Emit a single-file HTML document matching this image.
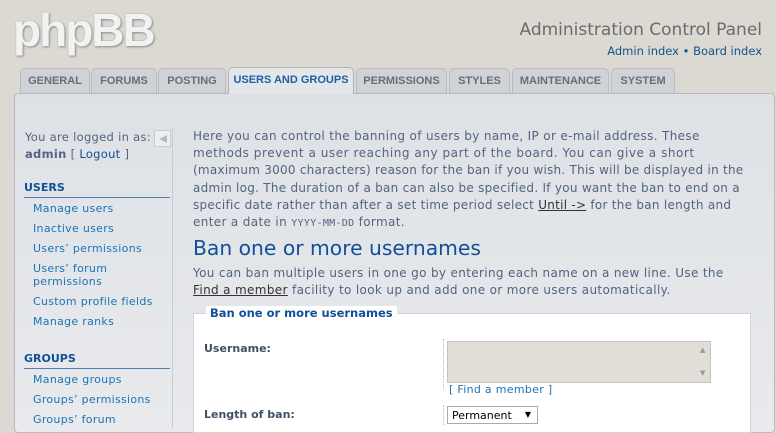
<!DOCTYPE html>
<html><head><meta charset="utf-8"><style>
*{margin:0;padding:0;box-sizing:border-box}
body{width:776px;height:422px;overflow:hidden;background:#dcd9d3;font-family:"DejaVu Sans",sans-serif;font-size:12px;color:#536482;position:relative}
.abs{position:absolute}
.logo{left:13px;top:3px;font-family:"Liberation Sans",sans-serif;font-size:46px;font-weight:bold;color:#f2f2f2;letter-spacing:-2px;text-shadow:0 0 1px #999,1px 1px 2px #888;}
.acp{right:14px;top:20px;font-size:17px;color:#6b6b6b}
.links{right:14px;top:44px;font-size:11.5px;color:#105289}
.tab{position:absolute;top:68px;height:25px;background:#cfd3d8;border:1px solid #b8bcc2;border-bottom:none;border-radius:5px 5px 0 0;font-family:"Liberation Sans",sans-serif;font-size:11px;font-weight:bold;color:#6a6e74;text-align:center;line-height:24px}
.tab.on{background:#e4e7ea;color:#2060a0;height:27px;top:67px;border-color:#aeb3b9}
.panel{left:14px;top:93px;width:761px;height:340px;background:linear-gradient(#dde1e5,#e9eaed);border:1px solid #b5b9bf;border-radius:4px}
.side a,.side div{position:absolute;left:33px;color:#1b74b8;font-size:11px;line-height:13px;letter-spacing:0.3px}
.hd{position:absolute;left:24px;width:146px;font-weight:bold;font-size:10.5px;color:#115098;border-bottom:1px solid #4f7eaa;padding-bottom:3px;letter-spacing:0 !important}
.main{left:193px;top:128px;line-height:17.2px;color:#536482;font-size:12px;letter-spacing:0.35px;white-space:nowrap}
u{color:#333}
</style></head><body>
<div class="abs logo">phpBB</div>
<div class="abs acp">Administration Control Panel</div>
<div class="abs links">Admin index • Board index</div>
<div class="abs panel"></div>
<div class="tab" style="left:20px;width:70px">GENERAL</div>
<div class="tab" style="left:91px;width:66px">FORUMS</div>
<div class="tab" style="left:158px;width:68px">POSTING</div>
<div class="tab on" style="left:228px;width:126px">USERS AND GROUPS</div>
<div class="tab" style="left:356px;width:91px">PERMISSIONS</div>
<div class="tab" style="left:449px;width:61px">STYLES</div>
<div class="tab" style="left:512px;width:97px">MAINTENANCE</div>
<div class="tab" style="left:611px;width:64px">SYSTEM</div>

<div class="abs" style="left:25px;top:129px;font-size:11.5px;color:#536482;line-height:17px;letter-spacing:0.3px">You are logged in as:<br><b style="color:#536482">admin</b> [ <span style="color:#105289">Logout</span> ]</div>
<div class="abs" style="left:154px;top:130px;width:17px;height:17px;background:#eceef0;border:1px solid #c8ccd0"><div style="position:absolute;left:4px;top:4px;border-right:8px solid #b8bcc2;border-top:4px solid transparent;border-bottom:4px solid transparent"></div></div>
<div class="abs" style="left:172px;top:128px;width:1px;height:300px;background:#c8ccd2"></div>
<div class="side">
<div class="hd" style="top:181px;left:24px;color:#115098">USERS</div>
<a style="top:202px">Manage users</a>
<a style="top:222px">Inactive users</a>
<a style="top:242px">Users’ permissions</a>
<a style="top:262px">Users’ forum<br>permissions</a>
<a style="top:295px">Custom profile fields</a>
<a style="top:315px">Manage ranks</a>
<div class="hd" style="top:352px;left:24px;color:#115098">GROUPS</div>
<a style="top:373px">Manage groups</a>
<a style="top:393px">Groups’ permissions</a>
<a style="top:413px">Groups’ forum</a>
</div>

<div class="abs main">Here you can control the banning of users by name, IP or e-mail address. These<br><span style="letter-spacing:0.55px">methods prevent a user reaching any part of the board. You can give a short</span><br><span style="letter-spacing:0.25px">(maximum 3000 characters) reason for the ban if you wish. This will be displayed in the</span><br><span style="letter-spacing:0.27px">admin log. The duration of a ban can also be specified. If you want the ban to end on a</span><br><span style="letter-spacing:0.27px">specific date rather than after a set time period select <u>Until -&gt;</u> for the ban length and</span><br>enter a date in <span style="font-family:'DejaVu Sans Mono',monospace;font-size:10px;letter-spacing:0.3px">YYYY-MM-DD</span> format.</div>
<div class="abs" style="left:193px;top:236px;font-size:20.3px;color:#115098">Ban one or more usernames</div>
<div class="abs main" style="top:265px">You can ban multiple users in one go by entering each name on a new line. Use the<br><u>Find a member</u> facility to look up and add one or more users automatically.</div>
<div class="abs" style="left:193px;top:313px;width:558px;height:120px;background:#fff;border:1px solid #d0d3d8"></div>
<div class="abs" style="left:206px;top:306px;background:#fff;padding:0 4px;font-weight:bold;font-size:11.5px;color:#115098">Ban one or more usernames</div>
<div class="abs" style="left:204px;top:342px;font-weight:bold;font-size:11px;color:#425067">Username:</div>
<div class="abs" style="left:204px;top:408px;font-weight:bold;font-size:11px;color:#425067">Length of ban:</div>
<div class="abs" style="left:443px;top:339px;height:50px;border-left:1px dotted #bbb"></div>
<div class="abs" style="left:443px;top:405px;height:20px;border-left:1px dotted #bbb"></div>
<div class="abs" style="left:447px;top:341px;width:264px;height:42px;background:#e1ddd7;border:1px solid #c5c5c5"></div>
<div class="abs" style="left:700px;top:346px;font-size:7px;color:#999">▲</div>
<div class="abs" style="left:700px;top:369px;font-size:7px;color:#999">▼</div>
<div class="abs" style="left:449px;top:383px;color:#1b74b8;font-size:11px;letter-spacing:0.3px">[ Find a member ]</div>
<div class="abs" style="left:447px;top:406px;width:91px;height:18px;border:1px solid #aaa;background:#fff;font-size:11px;color:#000;padding:2px 4px">Permanent <span style="position:absolute;right:6px;top:3px;font-size:8px">▼</span></div>
</body></html>
